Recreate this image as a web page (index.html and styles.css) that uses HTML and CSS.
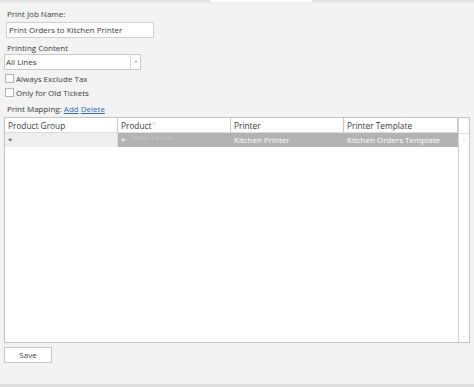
FILE: index.html
```html
<!DOCTYPE html>
<html>
<head>
<meta charset="utf-8">
<link rel="stylesheet" href="styles.css">
</head>
<body>
<div class="topbar"><div class="tab"></div></div>
<div class="form">
  <div class="label l-name">Print Job Name:</div>
  <div class="textbox">Print Orders to Kitchen Printer</div>
  <div class="label l-content">Printing Content</div>
  <div class="combo"><span class="combo-text">All Lines</span><span class="combo-btn"><span class="tri"></span></span></div>
  <div class="check c1"><span class="box"></span><span>Always Exclude Tax</span></div>
  <div class="check c2"><span class="box"></span><span>Only for Old Tickets</span></div>
  <div class="mapping">Print Mapping: <a class="link">Add</a> <a class="link">Delete</a></div>
  <div class="grid">
    <div class="gmain">
      <div class="row head">
        <div class="cell">Product Group</div>
        <div class="cell">Product<span class="filter">&#x22CE;</span></div>
        <div class="cell">Printer</div>
        <div class="cell">Printer Template</div>
      </div>
      <div class="row data">
        <div class="cell first">*</div>
        <div class="cell sel">* <span class="ghost">Product Group</span></div>
        <div class="cell sel">Kitchen Printer</div>
        <div class="cell sel">Kitchen Orders Template</div>
      </div>
    </div>
    <div class="scroll">
      <div class="shead"></div>
      <div class="arrow up"></div>
      <div class="arrow down"></div>
    </div>
  </div>
  <div class="btn">Save</div>
</div>
<div class="bottombar"></div>
</body>
</html>
```
FILE: styles.css
```css
html, body { margin: 0; padding: 0; }
body {
  width: 474px; height: 387px; overflow: hidden;
  background: #f3f3f3;
  font-family: "Open Sans", "Noto Sans", sans-serif;
  font-size: 8px; color: #3a3a3a;
  display: flex; flex-direction: column;
}
.topbar { height: 2px; background: #e2e2e2; border-bottom: 1px solid #ececec; }
.tab { margin-left: 210px; width: 102px; height: 2px; background: #fff; }
.form { padding: 0 4px; display: flex; flex-direction: column; align-items: flex-start; flex: 1; }
.label { line-height: 11px; padding-left: 3px; }
.l-name { margin-top: 5px; }
.textbox {
  margin-top: 3px; margin-left: 2px; width: 144px; height: 14px; line-height: 14px;
  background: #fff; border: 1px solid #cfcfcf; padding-left: 2px;
}
.l-content { margin-top: 4px; }
.combo {
  margin-top: 1px; width: 135px; height: 14px; background: #fff; border: 1px solid #c9c9c9;
  display: flex; line-height: 14px;
}
.combo-text { flex: 1; padding-left: 1px; }
.combo-btn { width: 9px; border-left: 1px solid #d6d6d6; display: flex; align-items: center; justify-content: center; }
.tri { width: 0; height: 0; border-left: 1.5px solid transparent; border-right: 1.5px solid transparent; border-top: 2px solid #777; }
.check { display: flex; align-items: center; gap: 2px; height: 9px; margin-left: 1px; }
.c1 { margin-top: 4px; }
.c2 { margin-top: 5px; }
.box { width: 7px; height: 7px; background: #fff; border: 1px solid #b5b5b5; }
.mapping { margin-top: 7px; padding-left: 3px; line-height: 10px; }
.link { color: #2f6eb5; text-decoration: underline; }
.grid {
  margin-top: 3px; height: 226px; background: #fff; border: 1px solid #c2c2c2;
  display: flex; box-sizing: border-box; width: 466px;
}
.gmain { flex: 1; display: flex; flex-direction: column; }
.row { display: flex; }
.cell { width: 113px; flex: none; box-sizing: border-box; padding-left: 3px; white-space: nowrap; overflow: hidden; }
.head .cell { height: 15px; line-height: 15px; border-right: 1px solid #c8c8c8; border-bottom: 1px solid #dcdcdc; font-size: 8.3px; }
.head .cell:last-child { width: 114px; }
.filter { font-size: 5px; color: #bbb; vertical-align: top; margin-left: 1px; position: relative; top: -2px; }
.data .cell { height: 14px; line-height: 13px; }
.data .first { background: #efefef; border-right: 1px solid #dedede; }
.data .sel { background: #b3b3b3; color: #fff; }
.data .cell:last-child { width: 114px; }
.ghost { color: #c9c9c9; font-size: 6px; margin-left: 4px; position: relative; top: -3px; }
.scroll { width: 10px; border-left: 1px solid #d4d4d4; position: relative; }
.shead { height: 15px; border-bottom: 1px solid #dcdcdc; }
.arrow { position: absolute; left: 4px; width: 0; height: 0; border-left: 1px solid transparent; border-right: 1px solid transparent; }
.up { top: 22px; border-bottom: 1.5px solid #aaa; }
.down { bottom: 5px; border-top: 1.5px solid #aaa; }
.btn {
  margin-top: 4px; width: 46px; height: 14px; line-height: 14px; text-align: center;
  background: #fff; border: 1px solid #c4c4c4;
}
.bottombar { height: 3px; background: #dedede; }
```
